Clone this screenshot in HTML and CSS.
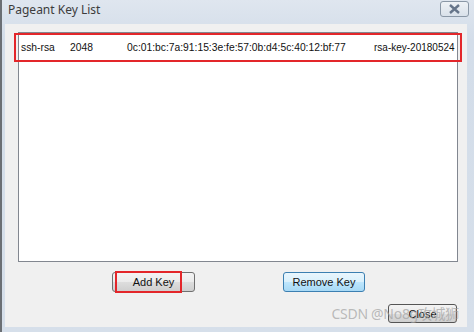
FILE: index.html
```html
<!DOCTYPE html>
<html lang="en">
<head>
  <meta charset="UTF-8" />
  <title>Pageant Key List</title>
  <link rel="stylesheet" href="styles.css">
</head>
<body>
  <div class="window">
    <div class="titlebar">
      <span class="title">Pageant Key List</span>
      <button class="close-x" aria-label="Close">
        <svg width="13" height="10" viewBox="0 0 13 10">
          <path d="M2 1 L11 9 M11 1 L2 9" stroke="#66758a" stroke-width="2.4" fill="none"/>
        </svg>
      </button>
    </div>
    <div class="client">
      <div class="listbox">
        <div class="row">
          <span class="col-type">ssh-rsa</span>
          <span class="col-bits">2048</span>
          <span class="col-fp">0c:01:bc:7a:91:15:3e:fe:57:0b:d4:5c:40:12:bf:77</span>
          <span class="col-name">rsa-key-20180524</span>
        </div>
      </div>
      <div class="actions">
        <button class="btn btn-add marked">Add Key</button>
        <button class="btn btn-remove default">Remove Key</button>
      </div>
      <div class="footer">
        <button class="btn btn-close">Close</button>
        <span class="watermark">CSDN @No8g攻城狮</span>
      </div>
    </div>
  </div>
</body>
</html>
```

FILE: styles.css
```css
/* Global */
body {
  margin: 0;
  background: #ffffff;
  font-family: 'Liberation Sans', Arial, sans-serif;
}
/* Window frame */
.window {
  width: 474px;
  height: 332px;
  box-sizing: border-box;
  border-left: 2px solid #6b6f74;
  background: linear-gradient(#dfe6ef, #d3dde9 40px, #d6dfea);
  display: flex;
  flex-direction: column;
}
.titlebar {
  height: 24px;
  display: flex;
  align-items: center;
  justify-content: space-between;
  padding: 0 5px 0 6px;
}
.title {
  font-family: 'Noto Sans', sans-serif;
  font-size: 12px;
  color: #3c3c3c;
  margin-top: -6px;
}
.close-x {
  width: 29px;
  height: 16px;
  margin-top: -6px;
  border: 1px solid #8a97a6;
  border-radius: 3px;
  background: linear-gradient(#eef2f6, #d9e1ea);
  display: flex;
  align-items: center;
  justify-content: center;
  padding: 0;
}
/* Client area */
.client {
  flex: 1;
  margin: 0 7px 5px 3px;
  background: #f0f0f0;
  display: flex;
  flex-direction: column;
}
.listbox {
  margin: 8px 9px 0 13px;
  height: 230px;
  box-sizing: border-box;
  background: #fff;
  border: 1px solid #828790;
}
.row {
  position: relative;
  height: 28px;
  display: flex;
  align-items: center;
  padding-left: 2px;
  font-size: 10.3px;
  color: #111;
}
/* red annotation box */
.row::after {
  content: '';
  position: absolute;
  top: 0;
  bottom: -1px;
  left: -5px;
  right: -5px;
  border: 2px solid #e3262a;
}
.col-type { width: 49px; }
.col-bits { width: 57px; }
.col-fp { width: 247px; }
.col-name { font-size: 10px; }
/* Buttons */
.actions {
  display: flex;
  margin-top: 10px;
  padding-left: 107px;
  gap: 88px;
}
.btn {
  font-family: 'Liberation Sans', Arial, sans-serif;
  font-size: 11px;
  color: #111;
  height: 20px;
  padding: 0;
  border: 1px solid #707070;
  border-radius: 3px;
  background: linear-gradient(#f3f3f3 0%, #ebebeb 50%, #dddddd 51%, #cfcfcf 100%);
}
.btn-add { width: 83px; position: relative; }
.btn-remove { width: 82px; }
.default {
  border-color: #3c7fb1;
  background: linear-gradient(#eaf6fd 0%, #d9f0fc 50%, #bee6fd 51%, #a7d9f5 100%);
}
.marked::after {
  content: '';
  position: absolute;
  top: -2px;
  bottom: -2px;
  left: 2px;
  right: 12px;
  border: 2px solid #e3262a;
}
.footer {
  position: relative;
  display: flex;
  justify-content: flex-end;
  margin-top: 12px;
  padding-right: 10px;
}
.btn-close {
  width: 69px;
  height: 19px;
  border-color: #555;
}
.watermark {
  position: absolute;
  right: 8px;
  top: -1px;
  font-family: 'Noto Sans', 'Noto Sans CJK SC', sans-serif;
  font-size: 14px;
  color: rgba(160, 160, 160, 0.7);
  letter-spacing: -0.3px;
}
```
